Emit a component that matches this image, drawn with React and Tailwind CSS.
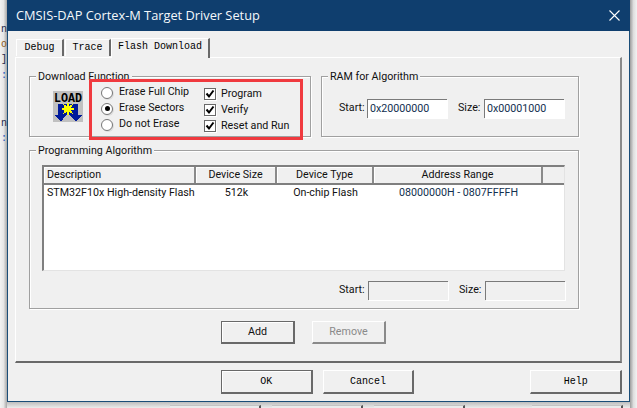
import React from "react";

const ui = "font-['Roboto','Liberation_Sans',Arial,sans-serif] text-[10.7px] text-[#111]";
const mono = "font-['Liberation_Mono','Courier_New',monospace] text-[10px] font-normal text-black";
const raised = "border border-[#696969] border-r-2 border-b-2 shadow-[inset_1px_1px_0_#fff]";

function Group({ title, className, children }) {
  return (
    <div className={`relative border border-[#a0a0a0] shadow-[inset_1px_1px_0_#fff,1px_1px_0_#fff] ${className}`}>
      <span className="absolute -top-[7px] left-[6px] bg-[#f0f0f0] px-[2px] leading-[13px] whitespace-nowrap">{title}</span>
      {children}
    </div>
  );
}

function Radio({ on, label }) {
  return (
    <div className="flex items-center h-[16px]">
      <span className="w-[12px] h-[12px] rounded-full border border-[#777] bg-white shadow-[1px_1px_0_#ddd] flex items-center justify-center">
        {on && <span className="w-[5px] h-[5px] rounded-full bg-black" />}
      </span>
      <span className="ml-[6px] whitespace-nowrap">{label}</span>
    </div>
  );
}

function Check({ label }) {
  return (
    <div className="flex items-center h-[16px]">
      <span className="w-[12px] h-[12px] border border-[#696969] bg-white flex items-center justify-center shadow-[1px_1px_0_#fff]">
        <svg width="10" height="10" viewBox="0 0 10 10"><path d="M1.5 4.5 L4 7.5 L8.5 1.5" fill="none" stroke="#000" strokeWidth="2" /></svg>
      </span>
      <span className="ml-[5px] whitespace-nowrap">{label}</span>
    </div>
  );
}

function Field({ label, value, labelW, disabled, className = "" }) {
  return (
    <div className={`flex items-center ${className}`}>
      <span className={`${labelW} whitespace-nowrap`}>{label}</span>
      <div className={`w-[80px] h-[19px] border-t border-l border-[#7a7a7a] shadow-[1px_1px_0_#fff] pl-[2px] leading-[17px] text-[#12304f] ${disabled ? "bg-[#f0f0f0]" : "bg-white"}`}>{value}</div>
    </div>
  );
}

function Head({ w, center, children }) {
  return (
    <div className={`${w} h-full shrink-0 bg-[#f0f0f0] border-r-2 border-[#8a8a8a] shadow-[inset_1px_1px_0_#fff] leading-[15px] ${center ? "text-center" : "pl-[3px]"}`}>{children}</div>
  );
}

function LoadIcon() {
  return (
    <svg width="30" height="31" viewBox="0 0 30 31" className="shrink-0" shapeRendering="crispEdges">
      <rect width="30" height="31" fill="#c0c0c0" />
      <text x="1" y="10.5" fontFamily="'Liberation Mono',monospace" fontWeight="700" fontSize="12" textLength="28" lengthAdjust="spacingAndGlyphs" fill="#000">LOAD</text>
      <path d="M5 13 H25 V24 H29 L23 31 L17 24 H13 L8 31 L1 24 H5 Z" fill="#001a9c" />
      <path d="M15 11 L16.5 15 L20 13 L18.5 16.5 L22 18 L18.5 19.5 L20 23 L16.5 21 L15 25 L13.5 21 L10 23 L11.5 19.5 L8 18 L11.5 16.5 L10 13 L13.5 15 Z" fill="#ffff00" />
    </svg>
  );
}

function Peek({ mt, color = "#1c2b4a", children }) {
  return <div className={`w-full text-right leading-[10px] ${mt}`} style={{ color }}>{children}</div>;
}

function PeekBar({ ml }) {
  return <div className={`w-[91px] h-[3px] bg-[#ebebeb] border-t border-[#c4c4c4] border-r-2 border-r-[#555] ${ml}`} />;
}

export default function App() {
  return (
    <div className={`relative w-[637px] h-[408px] overflow-hidden bg-[#f0f0f0] flex ${ui}`}>
      <div className="w-[7px] h-full shrink-0 overflow-hidden bg-gradient-to-r from-[#f2f2f2] via-[#e6e6e6] to-[#a8a8a8] font-['Liberation_Mono',monospace] text-[10px] pt-[25px]">
        <Peek mt="mt-0">n</Peek>
        <Peek mt="mt-[5px]" color="#8a5a20">o</Peek>
        <Peek mt="mt-[5px]">]</Peek>
        <Peek mt="mt-[6px]" color="#2050c0">:</Peek>
        <Peek mt="mt-[38px]">n</Peek>
        <Peek mt="mt-[5px]" color="#2050c0">:</Peek>
      </div>

      <div className="w-[623px] h-full shrink-0 flex flex-col">
        <div className="h-[402px] shrink-0 flex flex-col border-x border-b border-[#1a4d78] bg-[#f0f0f0]">
          <div className="h-[31px] shrink-0 -mx-px bg-[#0f3e6e] flex items-center justify-between pl-[9px] pr-[10px] font-['Open_Sans','Noto_Sans',sans-serif] text-[12.8px] text-[#f4f8fb]">
            <span className="whitespace-nowrap">CMSIS-DAP Cortex-M Target Driver Setup</span>
            <svg width="11" height="11" viewBox="0 0 11 11"><path d="M0.5 0.5 L10.5 10.5 M10.5 0.5 L0.5 10.5" stroke="#fff" strokeWidth="1.1" /></svg>
          </div>

          <div className="flex-1 min-h-0 px-[7px] pt-[6px] flex flex-col">
            <div className={`flex items-end h-[20px] pl-px relative z-10 ${mono}`}>
              <div className="w-[48px] h-[17px] border-t border-l border-white border-r-2 border-r-[#696969] text-center leading-[16px] mb-px">Debug</div>
              <div className="w-[46px] h-[17px] ml-px border-t border-l border-white border-r-2 border-r-[#696969] text-center leading-[16px] mb-px">Trace</div>
              <div className="w-[99px] h-[20px] -mb-px bg-[#f0f0f0] border-t border-l border-white border-r-2 border-r-[#696969] text-center leading-[16px]">Flash Download</div>
            </div>

            <div className="h-[306px] shrink-0 border-t border-l border-white border-r-2 border-r-[#8a8a8a] border-b-2 border-b-[#696969] pl-[13px] pt-[18px] pr-[41px]">
              <div className="flex gap-[10px] h-[61px]">
                <Group title="Download Function" className="w-[282px] flex items-center pl-[23px]">
                  <LoadIcon />
                  <div className="ml-[18px] w-[103px] flex flex-col mt-[4px]">
                    <Radio label="Erase Full Chip" />
                    <Radio on label="Erase Sectors" />
                    <Radio label="Do not Erase" />
                  </div>
                  <div className="flex flex-col mt-[7px]">
                    <Check label="Program" />
                    <Check label="Verify" />
                    <Check label="Reset and Run" />
                  </div>
                </Group>
                <Group title="RAM for Algorithm" className="flex-1 flex items-center pl-[17px] pt-[3px]">
                  <Field label="Start:" value="0x20000000" labelW="w-[28px]" />
                  <Field label="Size:" value="0x00001000" labelW="w-[26px]" className="ml-[11px]" />
                </Group>
              </div>

              <Group title="Programming Algorithm" className="mt-[13px] h-[159px] pl-[12px] pt-[14px] pr-[13px] flex flex-col">
                <div className="h-[106px] shrink-0 border-t-2 border-l-2 border-[#7f7f7f] border-r border-b border-r-[#e3e3e3] border-b-[#e3e3e3] bg-white flex flex-col">
                  <div className="h-[16px] shrink-0 flex border-b-2 border-[#7f7f7f] box-content">
                    <Head w="w-[152px]">Description</Head>
                    <Head w="w-[81px]" center>Device Size</Head>
                    <Head w="w-[97px]" center>Device Type</Head>
                    <Head w="w-[169px]" center>Address Range</Head>
                    <div className="flex-1 bg-[#f0f0f0]" />
                  </div>
                  <div className="flex h-[17px] items-center">
                    <div className="w-[152px] pl-[3px] whitespace-nowrap">STM32F10x High-density Flash</div>
                    <div className="w-[81px] text-center">512k</div>
                    <div className="w-[97px] text-center whitespace-nowrap">On-chip Flash</div>
                    <div className="w-[169px] text-center whitespace-nowrap text-[#12304f]">08000000H - 0807FFFFH</div>
                  </div>
                </div>
                <div className="flex justify-end mt-[10px]">
                  <Field disabled label="Start:" value="" labelW="w-[29px]" />
                  <Field disabled label="Size:" value="" labelW="w-[26px]" className="ml-[11px]" />
                </div>
              </Group>

              <div className="flex mt-[12px] pl-[192px] gap-[17px]">
                <button className={`w-[74px] h-[23px] bg-[#f0f0f0] text-center ${raised}`}>Add</button>
                <button className="w-[74px] h-[23px] bg-[#f0f0f0] text-center text-[#8a8a8a] border-t border-l border-white border-r-2 border-b-2 border-r-[#8a8a8a] border-b-[#8a8a8a]">Remove</button>
              </div>
            </div>

            <div className={`flex mt-[7px] ml-[206px] ${mono}`}>
              <button className={`w-[92px] h-[24px] ${raised}`}>OK</button>
              <button className="w-[92px] h-[24px] ml-[10px] border-t border-l border-white border-r-2 border-b-2 border-r-[#696969] border-b-[#696969]">Cancel</button>
              <button className="w-[92px] h-[24px] ml-[116px] border-t border-l border-white border-r-2 border-b-2 border-r-[#696969] border-b-[#696969]">Help</button>
            </div>
          </div>
        </div>

        <div className="flex-1 flex pt-[3px] bg-gradient-to-b from-[#bdbdbd] to-[#ececec]">
          <PeekBar ml="ml-[163px]" />
          <PeekBar ml="ml-[11px]" />
          <PeekBar ml="ml-[11px]" />
          <PeekBar ml="ml-[67px]" />
        </div>
      </div>

      <div className="flex-1 bg-gradient-to-r from-[#9c9c9c] via-[#dedede] to-[#f2f2f2]" />

      <div className="absolute left-[89px] top-[79px] w-[214px] h-[61px] border-[3px] border-[#f03a3f] pointer-events-none" />
    </div>
  );
}
